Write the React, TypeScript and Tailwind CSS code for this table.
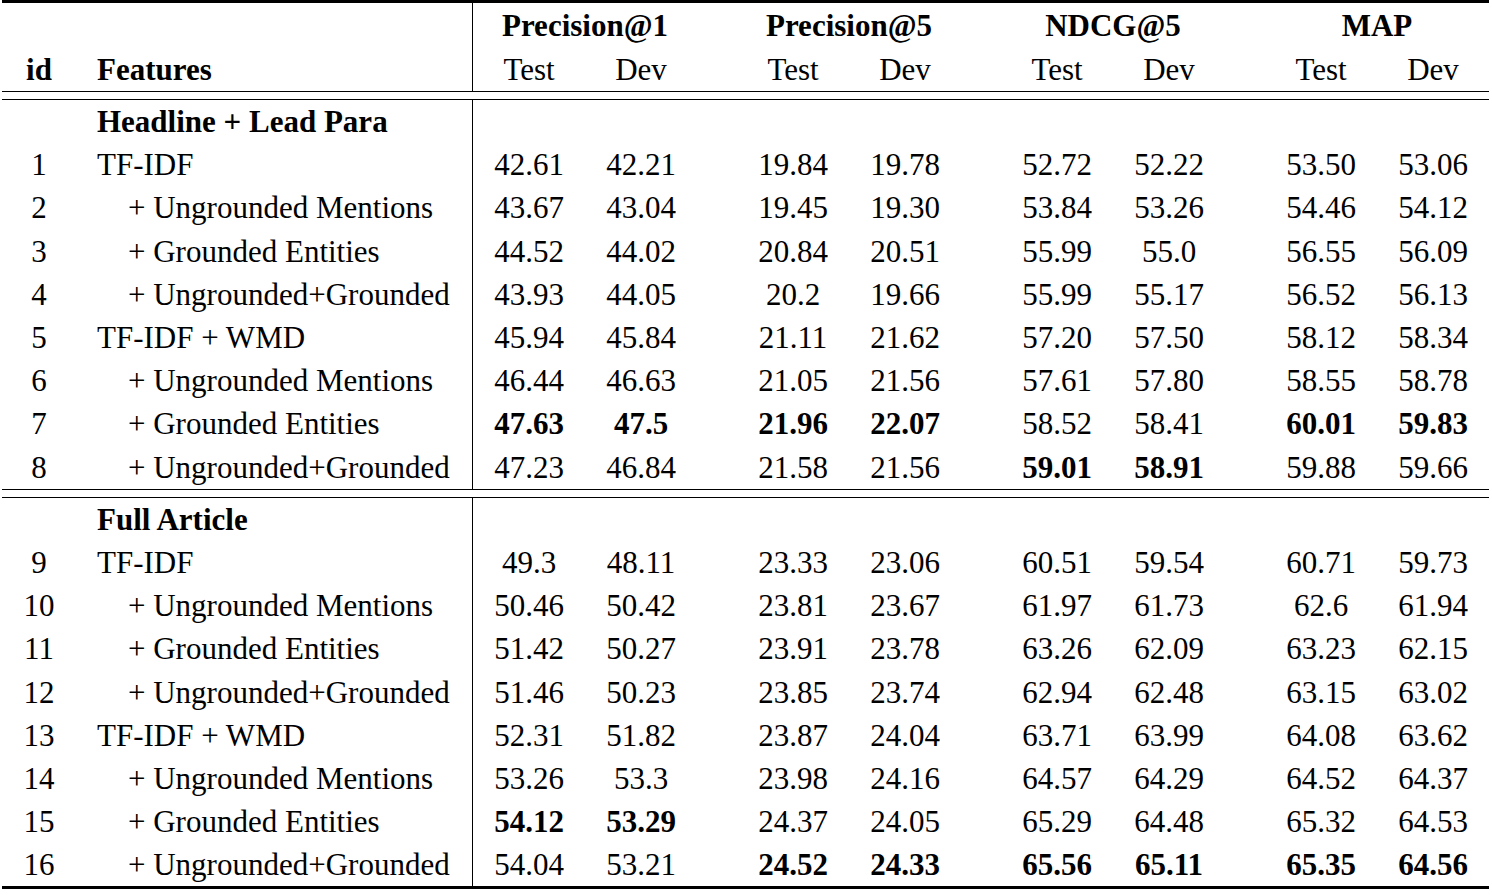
import React from "react";

type Row = {
  id: string;
  label: string;
  indent: boolean;
  vals: string[];
  bold: boolean[];
};

const mk = (id: string, label: string, indent: boolean, s: string, b: number[] = []): Row => ({
  id,
  label,
  indent,
  vals: s.split(" "),
  bold: [0, 1, 2, 3, 4, 5, 6, 7].map((i) => b.includes(i)),
});

const block1: Row[] = [
  mk("1", "TF-IDF", false, "42.61 42.21 19.84 19.78 52.72 52.22 53.50 53.06"),
  mk("2", "+ Ungrounded Mentions", true, "43.67 43.04 19.45 19.30 53.84 53.26 54.46 54.12"),
  mk("3", "+ Grounded Entities", true, "44.52 44.02 20.84 20.51 55.99 55.0 56.55 56.09"),
  mk("4", "+ Ungrounded+Grounded", true, "43.93 44.05 20.2 19.66 55.99 55.17 56.52 56.13"),
  mk("5", "TF-IDF + WMD", false, "45.94 45.84 21.11 21.62 57.20 57.50 58.12 58.34"),
  mk("6", "+ Ungrounded Mentions", true, "46.44 46.63 21.05 21.56 57.61 57.80 58.55 58.78"),
  mk("7", "+ Grounded Entities", true, "47.63 47.5 21.96 22.07 58.52 58.41 60.01 59.83", [0, 1, 2, 3, 6, 7]),
  mk("8", "+ Ungrounded+Grounded", true, "47.23 46.84 21.58 21.56 59.01 58.91 59.88 59.66", [4, 5]),
];

const block2: Row[] = [
  mk("9", "TF-IDF", false, "49.3 48.11 23.33 23.06 60.51 59.54 60.71 59.73"),
  mk("10", "+ Ungrounded Mentions", true, "50.46 50.42 23.81 23.67 61.97 61.73 62.6 61.94"),
  mk("11", "+ Grounded Entities", true, "51.42 50.27 23.91 23.78 63.26 62.09 63.23 62.15"),
  mk("12", "+ Ungrounded+Grounded", true, "51.46 50.23 23.85 23.74 62.94 62.48 63.15 63.02"),
  mk("13", "TF-IDF + WMD", false, "52.31 51.82 23.87 24.04 63.71 63.99 64.08 63.62"),
  mk("14", "+ Ungrounded Mentions", true, "53.26 53.3 23.98 24.16 64.57 64.29 64.52 64.37"),
  mk("15", "+ Grounded Entities", true, "54.12 53.29 24.37 24.05 65.29 64.48 65.32 64.53", [0, 1]),
  mk("16", "+ Ungrounded+Grounded", true, "54.04 53.21 24.52 24.33 65.56 65.11 65.35 64.56", [2, 3, 4, 5, 6, 7]),
];

function NumCells({ vals, bold }: { vals: string[]; bold?: boolean[] }) {
  return (
    <div className="flex">
      {[0, 1, 2, 3].map((g) => (
        <div key={g} className={`flex ${g > 0 ? "ml-[40px]" : ""}`}>
          {[0, 1].map((k) => {
            const i = g * 2 + k;
            return (
              <div
                key={k}
                className={`w-[112px] text-center ${bold && bold[i] ? "font-bold" : ""}`}
              >
                {vals[i]}
              </div>
            );
          })}
        </div>
      ))}
    </div>
  );
}

function DataRow({ r }: { r: Row }) {
  return (
    <div className="flex h-[43.2px] items-center">
      <div className="w-[78px] text-center">{r.id}</div>
      <div
        className={`w-[395px] self-stretch flex items-center border-r border-black ${
          r.indent ? "pl-[50px]" : "pl-[19px]"
        }`}
      >
        {r.label}
      </div>
      <NumCells vals={r.vals} bold={r.bold} />
    </div>
  );
}

function SectionRow({ title }: { title: string }) {
  return (
    <div className="flex h-[43.2px] items-center">
      <div className="w-[78px]" />
      <div className="w-[395px] self-stretch flex items-center border-r border-black pl-[19px] font-bold">
        {title}
      </div>
    </div>
  );
}

function DoubleRule() {
  return (
    <div className="ml-[2px] w-[1487px] flex flex-col">
      <div className="h-px bg-black" />
      <div className="h-[7px]" />
      <div className="h-px bg-black" />
    </div>
  );
}

export default function App() {
  return (
    <div
      className="w-[1492px] h-[895px] bg-white text-black text-[31px] leading-none overflow-hidden"
      style={{ fontFamily: '"Liberation Serif", "Times New Roman", serif' }}
    >
      <div className="ml-[2px] w-[1487px] h-[3px] bg-black" />
      <div className="flex h-[44px] items-center">
        <div className="w-[78px]" />
        <div className="w-[395px] self-stretch border-r border-black" />
        <div className="flex font-bold">
          {["Precision@1", "Precision@5", "NDCG@5", "MAP"].map((h, g) => (
            <div key={h} className={`w-[224px] text-center ${g > 0 ? "ml-[40px]" : ""}`}>
              {h}
            </div>
          ))}
        </div>
      </div>
      <div className="flex h-[44px] items-center">
        <div className="w-[78px] text-center font-bold">id</div>
        <div className="w-[395px] self-stretch flex items-center border-r border-black pl-[19px] font-bold">
          Features
        </div>
        <NumCells vals={["Test", "Dev", "Test", "Dev", "Test", "Dev", "Test", "Dev"]} />
      </div>
      <DoubleRule />
      <SectionRow title="Headline + Lead Para" />
      {block1.map((r) => (
        <DataRow key={r.id} r={r} />
      ))}
      <DoubleRule />
      <SectionRow title="Full Article" />
      {block2.map((r) => (
        <DataRow key={r.id} r={r} />
      ))}
      <div className="ml-[2px] w-[1487px] h-[3px] bg-black" />
    </div>
  );
}
